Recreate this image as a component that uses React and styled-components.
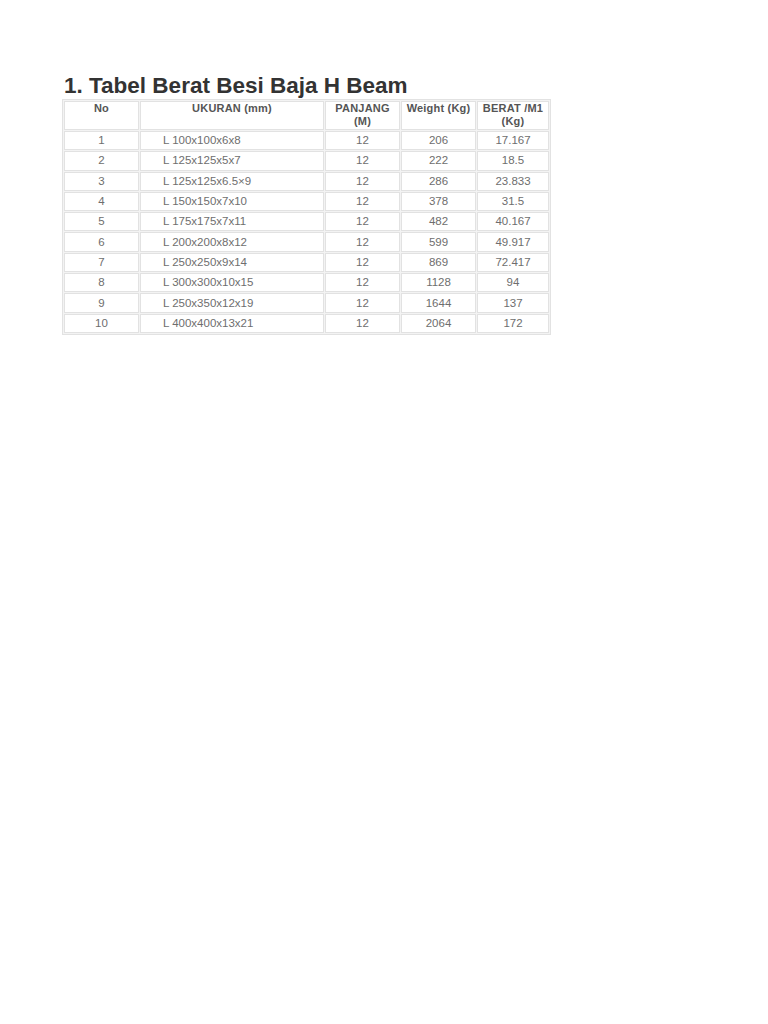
import React from "react";
import styled, { createGlobalStyle } from "styled-components";

const GlobalStyle = createGlobalStyle`
  * { box-sizing: border-box; }
  body {
    margin: 0;
    background: #ffffff;
    font-family: "Liberation Sans", Arial, sans-serif;
  }
`;

const Page = styled.div`
  padding: 74px 0 0 62px;
`;

const Title = styled.h2`
  margin: 0 0 1px 2px;
  font-size: 22.5px;
  font-weight: bold;
  line-height: 24px;
  color: #333333;
`;

const Table = styled.table`
  table-layout: fixed;
  width: 489px;
  border-collapse: separate;
  border-spacing: 1px;
  border: 1px solid #e2e2e2;
  background: #f3f3f3;
`;

const HeadCell = styled.th`
  height: 29px;
  padding: 0 4px;
  vertical-align: top;
  background: #ffffff;
  border: 1px solid #e2e2e2;
  font-size: 11px;
  font-weight: bold;
  letter-spacing: 0.2px;
  line-height: 13px;
  color: #555555;
  text-align: center;
`;

const Cell = styled.td`
  height: 19.3px;
  padding: 0 4px 1px ${(p) => (p.left ? "22px" : "4px")};
  background: #ffffff;
  border: 1px solid #e2e2e2;
  font-size: 11.5px;
  line-height: 14px;
  color: #6e6e6e;
  text-align: ${(p) => (p.left ? "left" : "center")};
  white-space: nowrap;
`;

const rows = [
  ["1", "L 100x100x6x8", "12", "206", "17.167"],
  ["2", "L 125x125x5x7", "12", "222", "18.5"],
  ["3", "L 125x125x6.5×9", "12", "286", "23.833"],
  ["4", "L 150x150x7x10", "12", "378", "31.5"],
  ["5", "L 175x175x7x11", "12", "482", "40.167"],
  ["6", "L 200x200x8x12", "12", "599", "49.917"],
  ["7", "L 250x250x9x14", "12", "869", "72.417"],
  ["8", "L 300x300x10x15", "12", "1128", "94"],
  ["9", "L 250x350x12x19", "12", "1644", "137"],
  ["10", "L 400x400x13x21", "12", "2064", "172"],
];

export default function App() {
  return (
    <Page>
      <GlobalStyle />
      <Title>1. Tabel Berat Besi Baja H Beam</Title>
      <Table>
        <colgroup>
          <col style={{ width: 75 }} />
          <col style={{ width: 184 }} />
          <col style={{ width: 75 }} />
          <col style={{ width: 75 }} />
          <col />
        </colgroup>
        <thead>
          <tr>
            <HeadCell>No</HeadCell>
            <HeadCell>UKURAN (mm)</HeadCell>
            <HeadCell>
              PANJANG
              <br />
              (M)
            </HeadCell>
            <HeadCell>Weight (Kg)</HeadCell>
            <HeadCell>
              BERAT /M1
              <br />
              (Kg)
            </HeadCell>
          </tr>
        </thead>
        <tbody>
          {rows.map((r) => (
            <tr key={r[0]}>
              <Cell>{r[0]}</Cell>
              <Cell left>{r[1]}</Cell>
              <Cell>{r[2]}</Cell>
              <Cell>{r[3]}</Cell>
              <Cell>{r[4]}</Cell>
            </tr>
          ))}
        </tbody>
      </Table>
    </Page>
  );
}
